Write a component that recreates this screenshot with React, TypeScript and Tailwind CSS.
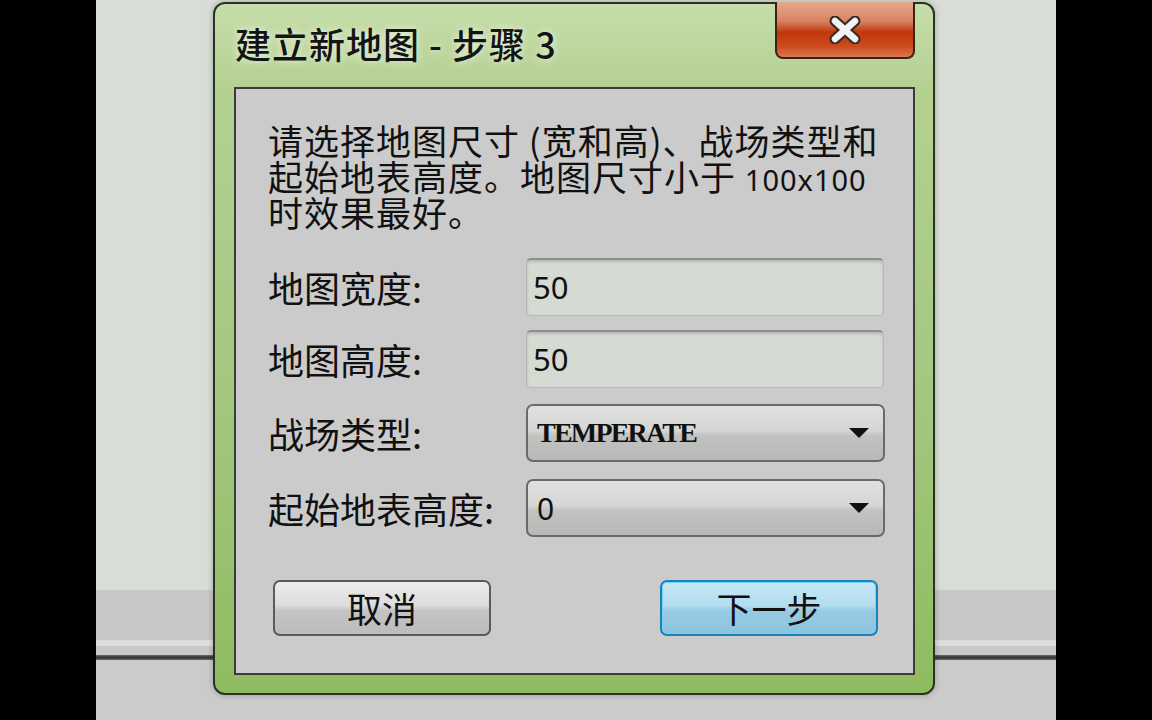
const cjk = "font-['Noto_Sans_CJK_SC','Noto_Sans',sans-serif]"

function Arrow() {
  return (
    <svg width="22" height="12" viewBox="0 0 22 12" className="shrink-0">
      <path d="M1 1 H21 L11 11 Z" fill="#111" />
    </svg>
  )
}

function CloseX() {
  return (
    <svg width="34" height="28" viewBox="0 0 34 28">
      <path d="M7 5 L27 23 M27 5 L7 23" stroke="#3a2a24" strokeWidth="11" strokeLinecap="round" />
      <path d="M7 5 L27 23 M27 5 L7 23" stroke="#f2f2f2" strokeWidth="6.5" strokeLinecap="round" />
    </svg>
  )
}

function Field({ label, children }: { label: string; children: React.ReactNode }) {
  return (
    <div className="flex items-center">
      <div className={`w-[258px] text-[36px] leading-none text-[#111] ${cjk}`}>{label}</div>
      {children}
    </div>
  )
}

function TextBox({ value }: { value: string }) {
  return (
    <div className="flex h-[58px] w-[358px] items-center rounded-[5px] border border-[#b4b9b2] border-t-2 border-t-[#8c8f8a] bg-[#d5dad3] pl-[6px] font-['Noto_Sans',sans-serif] text-[31px] text-[#111] shadow-[inset_0_2px_3px_rgba(0,0,0,0.15)]">
      {value}
    </div>
  )
}

function Select({ value, serif }: { value: string; serif?: boolean }) {
  return (
    <div className="flex h-[58px] w-[359px] items-center justify-between rounded-[7px] border-2 border-[#6a6a6a] bg-[linear-gradient(#e0e0de_0%,#d6d6d4_45%,#c2c2c0_55%,#b8b8b6_100%)] pl-[9px] pr-[13px]">
      <span
        className={
          serif
            ? "font-['Liberation_Serif',serif] text-[28px] font-bold tracking-[-1.8px] text-[#111]"
            : "font-['Noto_Sans',sans-serif] text-[30px] text-[#111]"
        }
      >
        {value}
      </span>
      <Arrow />
    </div>
  )
}

export default function App() {
  return (
    <div className="flex h-[720px] w-[1152px] overflow-hidden bg-black">
      <div className="w-[96px] shrink-0 bg-black" />
      <div className="relative flex w-[960px] shrink-0 flex-col">
        <div className="h-[590px] bg-[#d8ddd6]" />
        <div className="h-[50px] bg-[#c8c8c8]" />
        <div className="h-[6px] bg-[#dedede]" />
        <div className="h-[9px] bg-[#c9c9c9]" />
        <div className="h-[5px] bg-[linear-gradient(#6a6a6a,#333,#6a6a6a)]" />
        <div className="flex-1 bg-[#cbcbcb]" />

        {/* dialog window */}
        <div className="absolute left-[117px] top-[2px] flex h-[693px] w-[722px] flex-col rounded-[12px] border-2 border-[#2a3322] bg-[linear-gradient(#c6dda9_0%,#b4d192_12%,#a3c67e_60%,#8fbb60_100%)] shadow-[0_0_6px_rgba(0,0,0,0.25)]">
          <div className="relative flex h-[83px] items-center pb-[5px] pl-[20px]">
            <span className={`text-[36px] font-medium tracking-[1px] text-[#141414] [text-shadow:0_0_8px_rgba(255,255,255,0.8)] ${cjk}`}>
              建立新地图 - 步骤 3
            </span>
            <div className="absolute right-[18px] top-[-2px] flex h-[57px] w-[140px] items-center justify-center rounded-b-[8px] border-2 border-t-0 border-[#3a2218] bg-[linear-gradient(#e6a88c_0%,#d98262_35%,#c2360c_55%,#cc4a1c_80%,#dc7a50_100%)]">
              <CloseX />
            </div>
          </div>

          <div className="mb-[18px] ml-[19px] mr-[18px] flex flex-1 flex-col border-2 border-[#3b3b3b] bg-[#cbcbcb] pl-[32px] pt-[33px]">
            <div className={`whitespace-nowrap text-[35px] leading-[36px] tracking-[1px] text-[#111] ${cjk}`}>
              <div className="h-[36px]">请选择地图尺寸 (宽和高)、战场类型和</div>
              <div className="h-[36px]">
                起始地表高度。地图尺寸小于 <span className="font-['Noto_Sans',sans-serif] text-[29px]">100x100</span>
              </div>
              <div className="h-[36px]">时效果最好。</div>
            </div>

            <div className="mt-[28px] flex flex-col">
              <Field label="地图宽度:">
                <TextBox value="50" />
              </Field>
              <div className="mt-[14px]">
                <Field label="地图高度:">
                  <TextBox value="50" />
                </Field>
              </div>
              <div className="mt-[16px]">
                <Field label="战场类型:">
                  <Select value="TEMPERATE" serif />
                </Field>
              </div>
              <div className="mt-[17px]">
                <Field label="起始地表高度:">
                  <Select value="0" />
                </Field>
              </div>
            </div>

            <div className="ml-[5px] mt-[43px] flex gap-[169px]">
              <button className={`flex h-[56px] w-[218px] items-center justify-center rounded-[7px] border-2 border-[#5a5a5a] bg-[linear-gradient(#ececec_0%,#dcdcdc_45%,#c4c4c4_55%,#bcbcbc_100%)] text-[35px] text-[#111] ${cjk}`}>
                取消
              </button>
              <button className={`flex h-[56px] w-[218px] items-center justify-center rounded-[7px] border-2 border-[#1784bf] bg-[linear-gradient(#c6e8f6_0%,#b2dcef_45%,#98cbe2_55%,#8cc4de_100%)] text-[35px] text-[#111] shadow-[inset_0_0_0_1px_#7fd0f0] ${cjk}`}>
                下一步
              </button>
            </div>
          </div>
        </div>
      </div>
      <div className="w-[96px] shrink-0 bg-black" />
    </div>
  )
}
